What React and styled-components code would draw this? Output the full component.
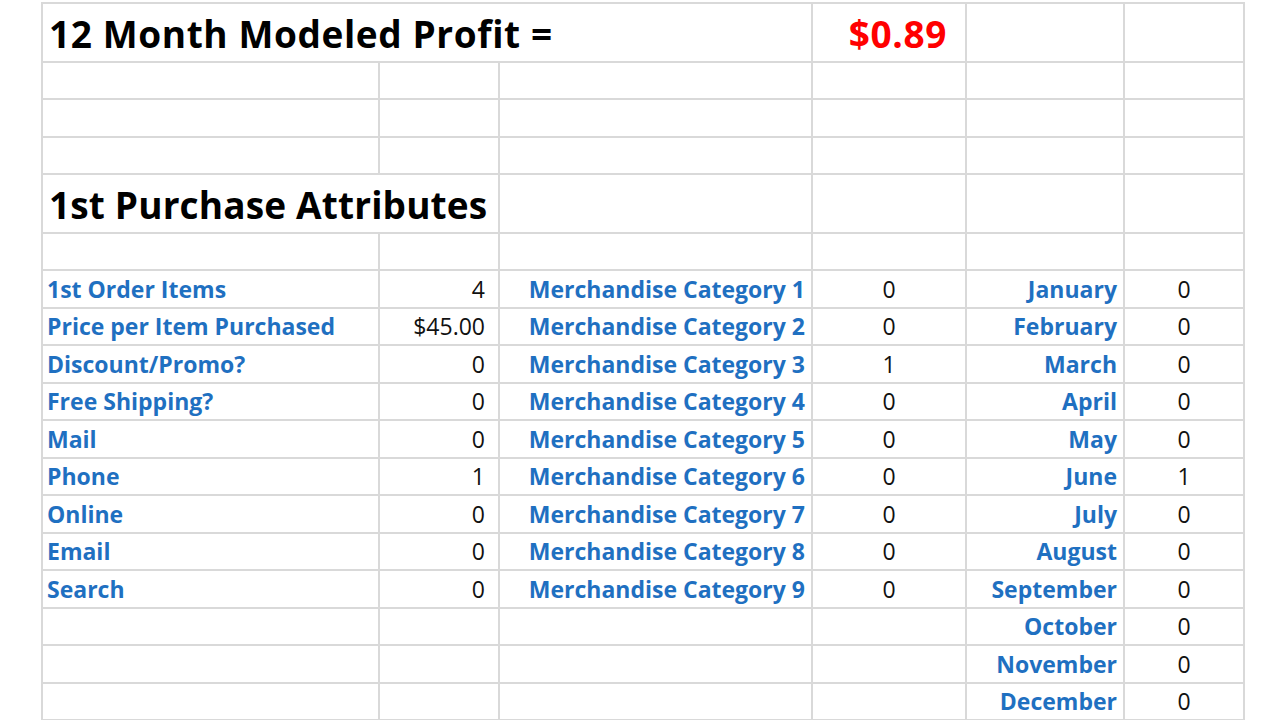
import React from "react";
import styled, { createGlobalStyle, css } from "styled-components";

const GlobalStyle = createGlobalStyle`
  html, body { margin: 0; padding: 0; background: #ffffff; }
  body { font-family: "Open Sans", "Lato", sans-serif; }
`;

const Page = styled.div`
  width: 1280px;
  height: 720px;
  overflow: hidden;
  padding: 2px 0 0 41px;
  box-sizing: border-box;
`;

const Sheet = styled.div`
  display: grid;
  grid-template-columns: 335px 118px 311px 152px 156px 118px;
  grid-template-rows: 57px 35px 36px 35px 57px 35px repeat(6, 36px 35px);
  gap: 2px;
  padding: 2px;
  width: max-content;
  background: #d9d9d9;
`;

const kinds = {
  title: css`
    font-size: 37px;
    font-weight: 700;
    color: #000000;
    padding-left: 6px;
    padding-top: 2px;
  `,
  profit: css`
    font-size: 37px;
    font-weight: 700;
    letter-spacing: 0.6px;
    color: #ff0000;
    padding-right: 18px;
    padding-top: 2px;
  `,
  label: css`
    font-size: 23px;
    font-weight: 700;
    color: #1f70c1;
    padding-left: 4px;
    padding-right: 6px;
  `,
  value: css`
    font-size: 23px;
    font-weight: 400;
    color: #111111;
    padding-right: 13px;
  `,
  empty: css``,
};

const justify = { left: "flex-start", right: "flex-end", center: "center" };

const Cell = styled.div`
  background: #ffffff;
  display: flex;
  align-items: center;
  justify-content: ${(p) => justify[p.$align || "left"]};
  grid-column: span ${(p) => p.$span || 1};
  white-space: nowrap;
  overflow: visible;
  box-sizing: border-box;
  line-height: 1;
  ${(p) => kinds[p.$kind || "empty"]}
  ${(p) => p.$centered && css`padding-right: 0;`}
  ${(p) => p.$tracking !== undefined && css`letter-spacing: ${p.$tracking}px;`}
`;

const leftRows = [
  ["1st Order Items", "4"],
  ["Price per Item Purchased", "$45.00"],
  ["Discount/Promo?", "0"],
  ["Free Shipping?", "0"],
  ["Mail", "0"],
  ["Phone", "1"],
  ["Online", "0"],
  ["Email", "0"],
  ["Search", "0"],
  [null, null],
  [null, null],
  [null, null],
];

const merchRows = [0, 0, 1, 0, 0, 0, 0, 0, 0].map((v, i) => [
  `Merchandise Category ${i + 1}`,
  String(v),
]);

const months = [
  "January", "February", "March", "April", "May", "June",
  "July", "August", "September", "October", "November", "December",
];
const monthValues = [0, 0, 0, 0, 0, 1, 0, 0, 0, 0, 0, 0];

const EmptyRow = ({ count }) =>
  Array.from({ length: count }).map((_, i) => <Cell key={i} />);

export default function App() {
  return (
    <>
      <GlobalStyle />
      <Page>
        <Sheet>
          <Cell $kind="title" $span={3} $tracking={0.6}>12 Month Modeled Profit =</Cell>
          <Cell $kind="profit" $align="right">$0.89</Cell>
          <Cell />
          <Cell />

          {[0, 1, 2].map((r) => (
            <React.Fragment key={`e${r}`}>
              <EmptyRow count={6} />
            </React.Fragment>
          ))}

          <Cell $kind="title" $span={2} $tracking={0.15}>1st Purchase Attributes</Cell>
          <EmptyRow count={4} />

          <EmptyRow count={6} />

          {leftRows.map((row, i) => {
            const merch = merchRows[i];
            return (
              <React.Fragment key={`d${i}`}>
                <Cell $kind={row[0] ? "label" : "empty"}>{row[0]}</Cell>
                <Cell $kind={row[1] ? "value" : "empty"} $align="right">{row[1]}</Cell>
                <Cell $kind={merch ? "label" : "empty"} $align="right">{merch ? merch[0] : null}</Cell>
                <Cell $kind={merch ? "value" : "empty"} $align="center" $centered>
                  {merch ? merch[1] : null}
                </Cell>
                <Cell $kind="label" $align="right">{months[i]}</Cell>
                <Cell $kind="value" $align="center" $centered>
                  {String(monthValues[i])}
                </Cell>
              </React.Fragment>
            );
          })}
        </Sheet>
      </Page>
    </>
  );
}
